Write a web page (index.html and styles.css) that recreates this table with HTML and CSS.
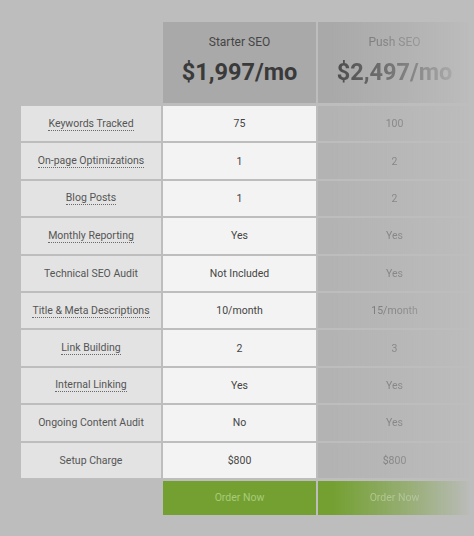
FILE: index.html
```html
<!DOCTYPE html>
<html>
<head>
<meta charset="utf-8">
<link rel="stylesheet" href="styles.css">
</head>
<body>
<div class="frame">
  <div class="table">
    <div class="col col-features">
      <div class="head head-empty"></div>
      <div class="cell feat"><span class="tip">Keywords Tracked</span></div>
      <div class="cell feat"><span class="tip">On-page Optimizations</span></div>
      <div class="cell feat"><span class="tip">Blog Posts</span></div>
      <div class="cell feat"><span class="tip">Monthly Reporting</span></div>
      <div class="cell feat"><span>Technical SEO Audit</span></div>
      <div class="cell feat"><span class="tip">Title &amp; Meta Descriptions</span></div>
      <div class="cell feat"><span class="tip">Link Building</span></div>
      <div class="cell feat"><span class="tip">Internal Linking</span></div>
      <div class="cell feat"><span>Ongoing Content Audit</span></div>
      <div class="cell feat"><span>Setup Charge</span></div>
      <div class="order order-empty"></div>
    </div>
    <div class="col col-starter">
      <div class="head">
        <div class="plan">Starter SEO</div>
        <div class="price">$1,997/mo</div>
      </div>
      <div class="cell val">75</div>
      <div class="cell val">1</div>
      <div class="cell val">1</div>
      <div class="cell val">Yes</div>
      <div class="cell val">Not Included</div>
      <div class="cell val">10/month</div>
      <div class="cell val">2</div>
      <div class="cell val">Yes</div>
      <div class="cell val">No</div>
      <div class="cell val">$800</div>
      <div class="order">Order Now</div>
    </div>
    <div class="col col-push">
      <div class="head">
        <div class="plan">Push SEO</div>
        <div class="price">$2,497/mo</div>
      </div>
      <div class="cell val">100</div>
      <div class="cell val">2</div>
      <div class="cell val">2</div>
      <div class="cell val">Yes</div>
      <div class="cell val">Yes</div>
      <div class="cell val">15/month</div>
      <div class="cell val">3</div>
      <div class="cell val">Yes</div>
      <div class="cell val">Yes</div>
      <div class="cell val">$800</div>
      <div class="order">Order Now</div>
    </div>
  </div>
</div>
</body>
</html>
```

FILE: styles.css
```css
html, body {
  margin: 0;
  padding: 0;
  background: #bdbdbd;
  font-family: Roboto, "Liberation Sans", sans-serif;
}

.frame {
  width: 474px;
  height: 536px;
  box-sizing: border-box;
  padding: 22px 0 0 21px;
  overflow: hidden;
}

.table {
  display: flex;
  flex-direction: row;
  gap: 2px;
}

.col {
  display: flex;
  flex-direction: column;
  gap: 2px;
}

.col-features { width: 140px; }
.col-starter { width: 153px; }
.col-push {
  width: 153px;
  -webkit-mask-image: linear-gradient(to right, #000 0%, #000 10%, rgba(0,0,0,0.5) 60%, rgba(0,0,0,0.12) 92%, rgba(0,0,0,0) 100%);
  mask-image: linear-gradient(to right, #000 0%, #000 10%, rgba(0,0,0,0.5) 60%, rgba(0,0,0,0.12) 92%, rgba(0,0,0,0) 100%);
}

.head {
  height: 81px;
  margin-bottom: 1px;
  background: #a9a9a9;
  display: flex;
  flex-direction: column;
  align-items: center;
  box-sizing: border-box;
  padding-top: 13px;
}

.head-empty { background: transparent; }

.plan {
  font-size: 12px;
  line-height: 14px;
  color: #454545;
}

.price {
  margin-top: 9px;
  font-size: 23.5px;
  line-height: 28px;
  font-weight: 700;
  color: #3a3a3a;
}

.col-push .plan { color: #6a6a6a; }
.col-push .price { color: #4a4a4a; }

.cell {
  height: 35.4px;
  display: flex;
  align-items: center;
  justify-content: center;
  font-size: 10.5px;
  box-sizing: border-box;
}

.feat {
  background: #e3e3e3;
  color: #555;
}

.tip {
  border-bottom: 1px dotted #6a6a6a;
}

.col-starter .val {
  background: #f3f3f3;
  color: #444;
}

.col-push .val {
  background: #b3b3b3;
  color: #656565;
}

.order {
  height: 34px;
  margin-top: 1px;
  background: #74a032;
  color: #a8cb7a;
  font-size: 10.5px;
  display: flex;
  align-items: center;
  justify-content: center;
}

.order-empty { background: transparent; }
```
